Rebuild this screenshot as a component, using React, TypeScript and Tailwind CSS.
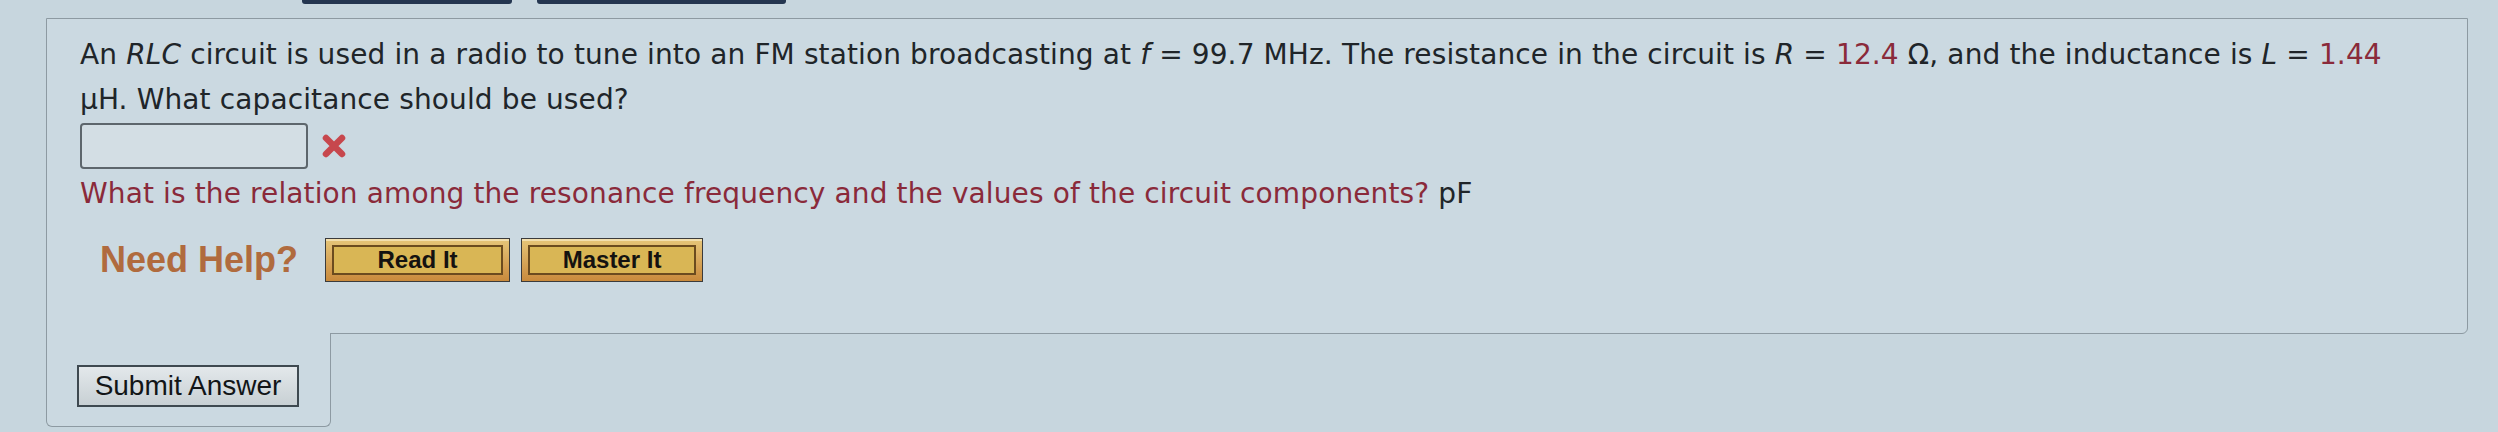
import React from "react";

function WrongMark() {
  return (
    <svg width="28" height="26" viewBox="0 0 28 26" className="ml-[12px] shrink-0">
      <path d="M6 5 L22 21 M22 5 L6 21" stroke="#c7474d" strokeWidth="6.5" strokeLinecap="round" />
    </svg>
  );
}

function HelpButton({ label, width }: { label: string; width: string }) {
  return (
    <button
      className={`${width} h-[44px] border border-[#3b3b3b] bg-linear-to-b from-[#e6c679] to-[#c98a3c] p-[6px] shadow-[inset_0_2px_0_#f3dfae]`}
    >
      <div className="h-full border-2 border-[#6b4b1f] bg-[#d9b655] flex items-center justify-center font-['Liberation_Sans',Arial,sans-serif] text-[24px] font-bold leading-none text-[#141210]">
        {label}
      </div>
    </button>
  );
}

export default function App() {
  const red = "text-[#8a2a3a]";

  return (
    <div className="w-[2498px] h-[432px] overflow-hidden bg-[#c7d6de]">
      {/* bottoms of the buttons above the panel */}
      <div className="flex h-[4px] pl-[302px] gap-[25px]">
        <div className="w-[210px] h-[4px] bg-[#243650] rounded-b-[3px]" />
        <div className="w-[249px] h-[4px] bg-[#243650] rounded-b-[3px]" />
      </div>

      <div className="ml-[46px] mt-[14px] w-[2422px] font-['DejaVu_Sans',Verdana,sans-serif] text-[#202529]">
        {/* question box */}
        <div className="border border-[#8d9aa2] rounded-br-[6px] bg-[#cbd9e1] pl-[33px] pr-[20px] pt-[13px] pb-[51px]">
          <p className="text-[28px] leading-[45px] tracking-[0.12px] whitespace-nowrap">
            An <i>RLC</i> circuit is used in a radio to tune into an FM station broadcasting at <i>f</i> = 99.7 MHz. The
            resistance in the circuit is <i>R</i> = <span className={red}>12.4</span> Ω, and the inductance is{" "}
            <i>L</i> = <span className={red}>1.44</span>
            <br />
            µH. What capacitance should be used?
          </p>

          <div className="flex items-center mt-[1px]">
            <input
              type="text"
              className="w-[228px] h-[46px] border-2 border-[#5d666c] rounded-[4px] bg-[#d3dee4] outline-none"
            />
            <WrongMark />
          </div>

          <p className="mt-[2px] text-[28px] leading-[45px] tracking-[0.12px]">
            <span className={red}>
              What is the relation among the resonance frequency and the values of the circuit components?
            </span>{" "}
            pF
          </p>

          <div className="flex items-center h-[44px] mt-[22px] pl-[20px]">
            <span className="font-['Liberation_Sans',Arial,sans-serif] text-[36px] font-bold leading-none text-[#b06b3e] mr-[27px]">
              Need Help?
            </span>
            <HelpButton label="Read It" width="w-[185px]" />
            <div className="w-[11px]" />
            <HelpButton label="Master It" width="w-[182px]" />
          </div>
        </div>

        {/* submit tab */}
        <div className="-mt-px w-[285px] h-[94px] border border-t-0 border-[#8d9aa2] rounded-b-[6px] bg-[#cbd9e1] pl-[30px] pt-[32px]">
          <button className="w-[222px] h-[42px] border-2 border-[#3e4950] bg-linear-to-b from-[#e3e8eb] to-[#c8d0d4] font-['Liberation_Sans',Arial,sans-serif] text-[28px] leading-none text-[#121517]">
            Submit Answer
          </button>
        </div>
      </div>
    </div>
  );
}
